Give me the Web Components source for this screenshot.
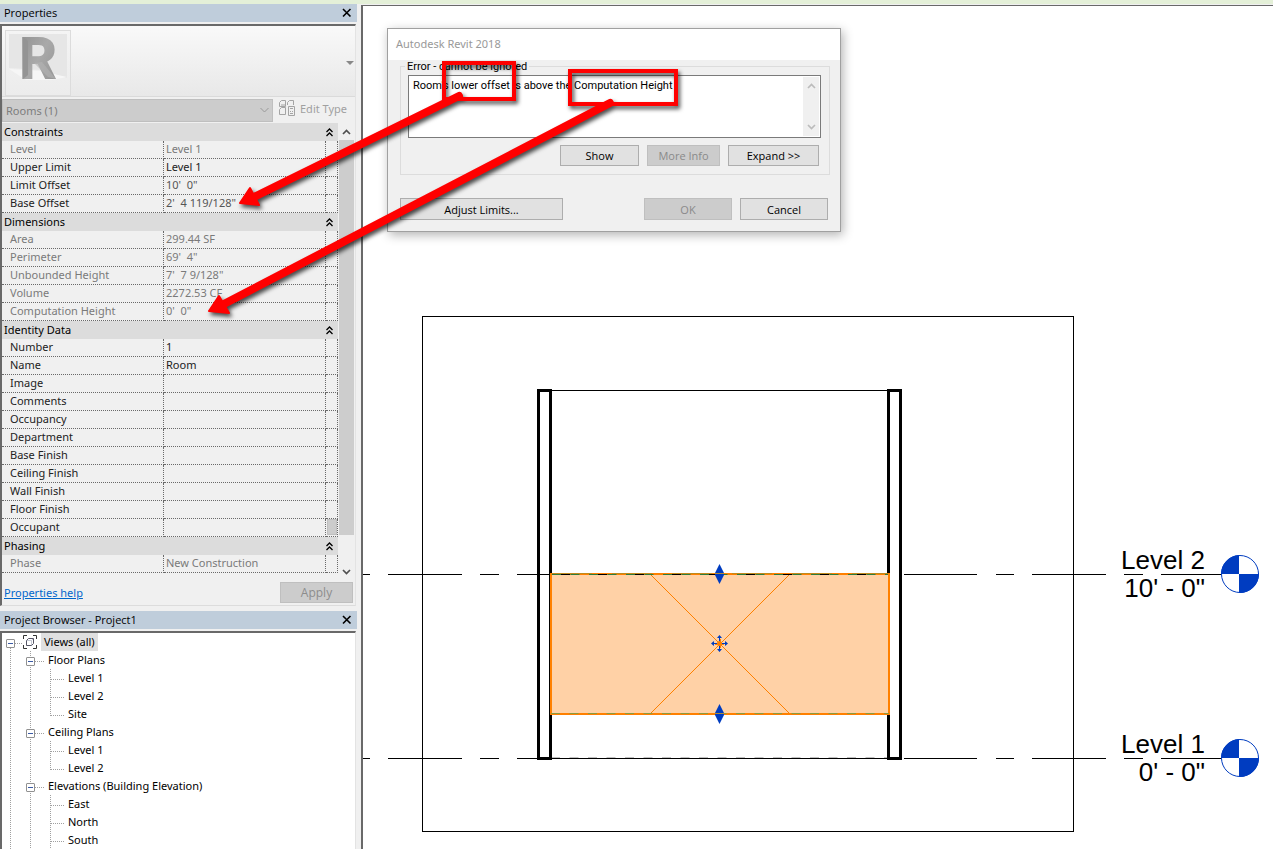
<!DOCTYPE html>
<html lang="en">
<head>
<meta charset="utf-8">
<title>Autodesk Revit 2018</title>
<style>
  :root {
    --face: #f0f0f0;
    --caption: #bfcddb;
    --edge: #696969;
    --orange: #ff8000;
    --blue: #003cc0;
  }
  body {
    margin: 0;
    background: var(--face);
    font-family: "Open Sans", "Noto Sans", sans-serif;
    font-size: 12px;
    color: #000;
  }
</style>
</head>
<body>
<revit-app>
  <dock-panel slot="dock" caption="Properties">
    <type-selector></type-selector>
    <property-grid></property-grid>
    <panel-footer></panel-footer>
  </dock-panel>
  <dock-panel slot="dock" caption="Project Browser - Project1" fill>
    <tree-item label="Views (all)" root open>
      <tree-item label="Floor Plans" open>
        <tree-item label="Level 1"></tree-item>
        <tree-item label="Level 2"></tree-item>
        <tree-item label="Site" last></tree-item>
      </tree-item>
      <tree-item label="Ceiling Plans" open>
        <tree-item label="Level 1"></tree-item>
        <tree-item label="Level 2" last></tree-item>
      </tree-item>
      <tree-item label="Elevations (Building Elevation)" open>
        <tree-item label="East"></tree-item>
        <tree-item label="North"></tree-item>
        <tree-item label="South"></tree-item>
      </tree-item>
    </tree-item>
  </dock-panel>
  <section-view></section-view>
  <error-dialog></error-dialog>
  <mark-up slot="markup"></mark-up>
</revit-app>

<script>
class RevitApp extends HTMLElement {
  constructor() {
    super();
    this.attachShadow({ mode: 'open' });
  }

  connectedCallback() {
    this.shadowRoot.innerHTML = `
    <style>
      :host {
        display: flex;
        flex-direction: column;
        height: 100vh;
        overflow: hidden;
        position: relative;
      }
      .ribbon { height: 4px; flex: none; background: #e4f0d8; }
      .work { flex: 1; min-height: 0; display: flex; gap: 4px; }
      .dock {
        width: 357px;
        flex: none;
        display: flex;
        flex-direction: column;
        gap: 5px;
      }
      main {
        flex: 1;
        min-width: 0;
        margin-top: 1px;
        position: relative;
        overflow: hidden;
        background: #fff;
        border-top: 1px solid var(--edge);
        border-left: 2px solid var(--edge);
      }
    </style>
    <div class="ribbon"></div>
    <div class="work">
      <div class="dock"><slot name="dock"></slot></div>
      <main><slot></slot></main>
    </div>
    <slot name="markup"></slot>
    `;
  }
}

class DockPanel extends HTMLElement {
  constructor() {
    super();
    this.attachShadow({ mode: 'open' });
  }

  connectedCallback() {
    this.shadowRoot.innerHTML = `
    <style>
      :host { display: flex; flex-direction: column; }
      :host([fill]) { flex: 1; min-height: 0; }
      header {
        display: flex;
        align-items: center;
        justify-content: space-between;
        height: 18px;
        padding: 0 4px;
        background: var(--caption);
      }
      h2 { margin: 0; font-size: 11px; line-height: 18px; font-weight: 400; }
      button { border: 0; padding: 0; background: none; width: 12px; height: 12px; display: flex; }
      .body {
        margin: 2px 1px 0 0;
        border: 2px solid var(--edge);
        border-right: 1px solid #e3e3e3;
        border-bottom: 1px solid #dcdcdc;
      }
      :host([fill]) .body { flex: 1; overflow: hidden; background: #fff; border-bottom: 0; }
    </style>
    <header>
      <h2>${this.getAttribute('caption')}</h2>
      <button type="button" aria-label="Close">
        <svg width="12" height="12"><path d="M2 2l7.500 7.500M9.500 2l-7.500 7.500" stroke="#000" stroke-width="1.600"/></svg>
      </button>
    </header>
    <div class="body"><slot></slot></div>
    `;
  }
}

class TypeSelector extends HTMLElement {
  constructor() {
    super();
    this.attachShadow({ mode: 'open' });
  }

  connectedCallback() {
    this.shadowRoot.innerHTML = `
    <style>
      :host { display: block; }
      .type {
        display: flex;
        align-items: center;
        justify-content: space-between;
        height: 67px;
        padding: 3px 1px 0 3px;
        border-bottom: 1px solid #dadada;
        background: linear-gradient(#f9f9f9, #e8e8e8);
      }
      .thumb { overflow: visible; border: 1px solid #dcdcdc; width: 64px; height: 64px; background: linear-gradient(#f4f4f4, #ececec); }
      .filter { display: flex; align-items: center; gap: 6px; margin-top: 2px; }
      .combo { display: grid; width: 271px; align-items: center; }
      .combo > * { grid-area: 1 / 1; }
      .combo svg { justify-self: end; margin-right: 4px; pointer-events: none; }
      select {
        appearance: none;
        width: 100%;
        height: 23px;
        border: 1px solid #bfbfbf;
        border-radius: 0;
        background: #ccc;
        color: #7d7d7d;
        opacity: 1;
        padding: 0 3px;
        font: 11px "Noto Sans", sans-serif;
      }
      .edit {
        display: flex;
        align-items: center;
        gap: 4px;
        border: 0;
        padding: 0 0 4px;
        background: none;
        color: #a0a0a0;
        font: 11px "Noto Sans", sans-serif;
      }
    </style>
    <div class="type">
      <svg class="thumb" viewBox="0 0 64 64" aria-hidden="true">
        <defs>
          <linearGradient id="metal" x1="0" y1="0" x2="1" y2="1">
            <stop offset="0" stop-color="#8c8c8c"/><stop offset=".5" stop-color="#a9a9a9"/><stop offset="1" stop-color="#8f8f8f"/>
          </linearGradient>
        </defs>
        <path d="M3 3H61V47L34 39L3 37Z" fill="#e6e6e6"/>
        <path d="M3 38L34 40L61 46L46 49L20 49Z" fill="#f6f6f6"/>
        <text x="13" y="48" font-family="Roboto" font-weight="900" font-size="59" fill="url(#metal)">R</text>
        <path d="M17 6L22 10V44L17 48Z" fill="#949494"/>
        <path d="M28 32L36 31L50 48L42 46Z" fill="#b4b4b4" opacity=".6"/>
      </svg>
      <svg width="9" height="6"><path d="M1 1h8l-4 4z" fill="#888"/></svg>
    </div>
    <div class="filter">
      <div class="combo">
        <select aria-label="Properties filter" disabled><option>Rooms (1)</option></select>
        <svg width="9" height="7"><path d="M.5 1L4.500 5L8.500 1" fill="none" stroke="#999"/></svg>
      </div>
      <button class="edit" type="button" disabled>
        <svg width="17" height="17" fill="none" stroke="#a4a4a4">
          <path d="M.5 2.500L2.500 .5H6.500V6.500H.5ZM8.500 2.500L10.500 .5H14.500V5M8.500 2.500V5M.5 9.500L2.500 7.500H6.500V14.500H.5ZM2 5H6"/>
          <path d="M9.500 6.500H15.500V15.500H9.500ZM11 8.500H14M11 11.500H12M13 11.500H14M11 13.500H14"/>
        </svg>
        Edit Type
      </button>
    </div>
    `;
  }
}

const GROUPS = [
  ['Constraints', [
    ['Level', 'Level 1', 'off'],
    ['Upper Limit', 'Level 1'],
    ['Limit Offset', "10'  0\"", 'dim'],
    ['Base Offset', "2'  4 119/128\"", 'dim'],
  ]],
  ['Dimensions', [
    ['Area', '299.44 SF', 'off'],
    ['Perimeter', "69'  4\"", 'off'],
    ['Unbounded Height', "7'  7 9/128\"", 'off'],
    ['Volume', '2272.53 CF', 'off'],
    ['Computation Height', "0'  0\"", 'off'],
  ]],
  ['Identity Data', [
    ['Number', '1'],
    ['Name', 'Room'],
    ['Image', ''],
    ['Comments', ''],
    ['Occupancy', ''],
    ['Department', ''],
    ['Base Finish', ''],
    ['Ceiling Finish', ''],
    ['Wall Finish', ''],
    ['Floor Finish', ''],
    ['Occupant', '', 'pick'],
  ]],
  ['Phasing', [
    ['Phase', 'New Construction', 'off'],
  ]],
];

class PropertyGrid extends HTMLElement {
  constructor() {
    super();
    this.attachShadow({ mode: 'open' });
  }

  rows([title, items]) {
    return `
      <tbody>
        <tr class="group">
          <th colspan="2" scope="rowgroup">${title}</th>
          <th><svg width="7" height="9" fill="none" stroke="#000" stroke-width="1.300"><path d="M.5 4L3.500 1L6.500 4M.5 8L3.500 5L6.500 8"/></svg></th>
        </tr>
        ${items.map(([name, value, kind = '']) => `
        <tr class="${kind}">
          <th scope="row">${name}</th>
          <td>${value}</td>
          <td>${kind === 'pick' ? '<button type="button" aria-label="Browse"></button>' : ''}</td>
        </tr>`).join('')}
      </tbody>`;
  }

  connectedCallback() {
    this.shadowRoot.innerHTML = `
    <style>
      :host { display: flex; margin-top: 1px; }
      table {
        flex: 1;
        table-layout: fixed;
        border-collapse: separate;
        border-spacing: 0;
        font: 11px/16px "Noto Sans", sans-serif;
        color: #222;
        align-self: flex-start;
        margin-bottom: 7px;
      }
      .name { width: 162px; }
      .more { width: 12px; }
      th, td {
        height: 17px;
        padding: 0 0 0 8px;
        text-align: left;
        vertical-align: top;
        font-weight: 400;
        white-space: pre;
        border-bottom: 1px dotted var(--edge);
        border-right: 1px dotted var(--edge);
      }
      td { padding: 0 0 0 2px; }
      td:last-child { padding: 0 0 0 1px; }
      .group th { background: #dcdcdc; border: 0; height: 18px; padding: 0 0 0 2px; color: #000; vertical-align: middle; }
      .group th:last-child { padding: 0; }
      .group svg, button { display: block; }
      .off { color: #7a7a7a; }
      .dim td { color: #555; }
      button { width: 10px; height: 16px; padding: 0; border: 1px solid #bfbfbf; background: #ccc; }
      .bar {
        width: 17px;
        display: flex;
        flex-direction: column;
        align-items: center;
      }
      .bar i { flex: 1; margin-bottom: 28px; width: 15px; background: #cdcdcd; }
      .bar svg { flex: none; margin: 6px 0 5px; }
    </style>
    <table>
      <colgroup><col class="name"><col><col class="more"></colgroup>
      ${GROUPS.map(this.rows).join('')}
    </table>
    <div class="bar">
      <svg width="9" height="6"><path d="M1 5L4.500 1.500L8 5" fill="none" stroke="#505050" stroke-width="1.700"/></svg>
      <i></i>
      <svg width="9" height="6"><path d="M1 1L4.500 4.500L8 1" fill="none" stroke="#505050" stroke-width="1.700"/></svg>
    </div>
    `;
  }
}

class PanelFooter extends HTMLElement {
  constructor() {
    super();
    this.attachShadow({ mode: 'open' });
  }

  connectedCallback() {
    this.shadowRoot.innerHTML = `
    <style>
      :host {
        display: flex;
        justify-content: space-between;
        align-items: center;
        padding: 2px;
      }
      a { color: #0066cc; font: 11px/18px "Noto Sans", sans-serif; }
      button {
        width: 73px;
        height: 21px;
        padding: 0;
        border: 1px solid #bfbfbf;
        background: #ccc;
        color: #8c8c8c;
        font: 12px "Open Sans", sans-serif;
      }
    </style>
    <a href="#help">Properties help</a>
    <button type="button" disabled>Apply</button>
    `;
  }
}

class TreeItem extends HTMLElement {
  constructor() {
    super();
    this.attachShadow({ mode: 'open' });
  }

  connectedCallback() {
    const open = this.hasAttribute('open');
    const root = this.hasAttribute('root');
    this.shadowRoot.innerHTML = `
    <style>
      /* the dotted trunk runs down the column of the expanders */
      :host {
        display: block;
        background: repeating-linear-gradient(#a0a0a0 0 1px, transparent 1px 2px) 8px 0 / 1px 100% no-repeat;
      }
      :host([last]) { background-size: 1px 11px; }
      :host([root]) { background-position: 8px 15px; }
      .row { display: flex; align-items: center; height: 18px; padding-left: 4px; }
      .twig {
        width: ${open ? (root ? 7 : 10) : 14}px;
        height: 1px;
        margin: 2px 0 0 ${open ? 0 : 5}px;
        background: repeating-linear-gradient(90deg, #a0a0a0 0 1px, transparent 1px 2px);
      }
      button { width: 9px; height: 9px; padding: 0; margin-top: 2px; border: 1px solid #919191; border-radius: 1px; background: #fff; display: flex; align-items: center; }
      button i { width: 5px; height: 1px; margin: auto; background: #3b5ba5; }
      .icon { margin: 0 4px 0 1px; }
      .label { font: 11px/18px "Noto Sans", sans-serif; padding: 0 3px; }
      :host([root]) .label { background: #e0e0e0; }
      .kids { padding-left: 20px; }
    </style>
    <div class="row">
      ${open ? '<button type="button" aria-label="Collapse"><i></i></button>' : ''}
      <span class="twig"></span>
      ${root ? `<svg class="icon" width="14" height="14" fill="none" stroke="#333">
        <path d="M.5 4V.5H4M10 .5H13.500V4M13.500 10V13.500H10M4 13.500H.5V10"/>
        <path d="M5.500 3.500H10.500V8.500L8.500 10.500H3.500V5.500Z" stroke="#556"/>
        <path d="M4 5.500H8.500V10M8.500 5.500L10 4" stroke="#c4c8d4"/>
      </svg>` : ''}
      <span class="label">${this.getAttribute('label')}</span>
    </div>
    <div class="kids"><slot></slot></div>
    `;
  }
}

class SectionView extends HTMLElement {
  constructor() {
    super();
    this.attachShadow({ mode: 'open' });
  }

  level(y, name, height) {
    return `
      <path d="M362 ${y}.5H370M388 ${y}.5H462M480 ${y}.5H499M517 ${y}.5H551M904 ${y}.5H977M996 ${y}.5H1014M1032 ${y}.5H1106M1124 ${y}.5H1143M1161 ${y}.5H1221" stroke="#000"/>
      <circle cx="1240" cy="${y}" r="18.500" fill="#fff" stroke="var(--blue)"/>
      <path d="M1239 ${y}V${y - 19}A19 19 0 0 0 1221 ${y}ZM1239 ${y}V${y + 19}A19 19 0 0 0 1259 ${y}Z" fill="var(--blue)"/>
      <text x="1121" y="${y - 5}">${name}</text>
      <text x="1205" y="${y + 23}" text-anchor="end">${height}</text>`;
  }

  grip(y) {
    return `<path d="M719.500 ${y - 10}L724 ${y - 1}V${y + 1}L719.500 ${y + 10}L715 ${y + 1}V${y - 1}Z" fill="var(--blue)"/>`;
  }

  connectedCallback() {
    this.shadowRoot.innerHTML = `
    <style>
      :host { display: block; }
      svg { display: block; }
      text { font: 26px "Liberation Sans", Arial, sans-serif; fill: #000; }
      .crisp { shape-rendering: crispEdges; }
    </style>
    <svg width="910" height="843" viewBox="363 6 910 843" fill="none">
      <rect x="422.500" y="316.500" width="651" height="515" stroke="#000"/>
      ${this.level(574, 'Level 2', "10' - 0\"")}
      ${this.level(758, 'Level 1', "0' - 0\"")}
      <path d="M551 390.500H889M551 758.500H889" stroke="#000"/>
      <path d="M551 757.500H889" stroke="#c0c0c0" stroke-dasharray="9 9.500"/>
      <g stroke="#000" stroke-width="3">
        <rect x="538.500" y="390.500" width="12" height="368"/>
        <rect x="888.500" y="390.500" width="12" height="368"/>
      </g>
      <rect x="551" y="574" width="338" height="140" fill="#ffd1a6" stroke="var(--orange)" stroke-width="2"/>
      <path d="M552 573.500H888" stroke="#c08a1e" stroke-dasharray="40 20"/>
      <path d="M552 574.500H888" stroke="#2e7d3c" stroke-dasharray="9 9.500"/>
      <path d="M561 574.500H888" stroke="#000" stroke-dasharray="9 28"/>
      <path d="M551 713.500H889" stroke="#8c9b3c" stroke-dasharray="9 9.500"/>
      <path class="crisp" d="M651 575L789 713M789 575L651 713" stroke="var(--orange)"/>
      ${this.grip(574)}
      ${this.grip(714)}
      <path d="M715 573.500H724M715 713.500H724" stroke="#b08a3c"/>
      <path d="M712 643.500H727M719.500 636V651" stroke="var(--blue)"/>
      <path d="M711 643.500l3-2.500v5zM728 643.500l-3-2.500v5zM719.500 635l-2.500 3h5zM719.500 652l-2.500-3h5z" fill="var(--blue)"/>
      <circle cx="719.500" cy="643.500" r="2.500" fill="var(--orange)"/>
      <path d="M715 644.500H724M720.500 639V648" stroke="var(--orange)"/>
    </svg>
    `;
  }
}

class ErrorDialog extends HTMLElement {
  constructor() {
    super();
    this.attachShadow({ mode: 'open' });
  }

  connectedCallback() {
    this.shadowRoot.innerHTML = `
    <style>
      /* a floating window over the drawing */
      :host {
        position: absolute;
        left: 24px;
        top: 22px;
        width: 452px;
        border: 1px solid #a0a0a0;
        background: var(--face);
        box-shadow: 2px 3px 10px rgba(0, 0, 0, .3);
        font-size: 11px;
      }
      h1 { margin: 0; padding: 0 8px 2px; background: #fff; color: #999; font: 11px/29px "Noto Sans", sans-serif; }
      form { padding: 0 12px 11px; }
      fieldset { margin: 0 -2px 0 0; padding: 3px 8px 8px 7px; border: 1px solid #dcdcdc; min-width: 0; }
      legend { padding: 0 2px; margin-left: -3px; font: 11px/13px Roboto, sans-serif; }
      .box { display: flex; height: 61px; margin: -1px 0 7px; border: 1px solid #7a7a7a; background: #fff; }
      textarea {
        flex: 1;
        resize: none;
        border: 0;
        outline: 0;
        padding: 3px 4px;
        overflow: hidden;
        font: 11px/14px Roboto, sans-serif;
        color: #000;
      }
      .bar {
        display: flex;
        flex-direction: column;
        justify-content: space-between;
        align-items: center;
        width: 16px;
        margin: 1px;
        padding: 6px 0;
        box-sizing: border-box;
        background: var(--face);
      }
      .actions { display: flex; justify-content: flex-end; align-items: center; gap: 8px; padding-right: 2px; }
      .answers { display: flex; align-items: center; gap: 8px; margin-top: 23px; }
      button {
        width: 88px;
        height: 22px;
        padding: 0;
        border: 1px solid #adadad;
        background: #e1e1e1;
        color: #000;
        font: 11px "Open Sans", sans-serif;
      }
      button:disabled { background: #ccc; border-color: #bfbfbf; color: #8a8a8a; }
      .actions button { height: 21px; }
      .actions .show { width: 79px; }
      .actions .info { width: 73px; }
      .actions .more { width: 91px; }
      .adjust { width: 163px; margin-right: auto; }
    </style>
    <h1>Autodesk Revit 2018</h1>
    <form>
      <fieldset>
        <legend>Error - cannot be ignored</legend>
        <div class="box">
          <textarea aria-label="Error message" readonly>Room's lower offset is above the Computation Height</textarea>
          <div class="bar">
            <svg width="9" height="6"><path d="M1 5L4.500 1.500L8 5" fill="none" stroke="#bcbcbc" stroke-width="1.700"/></svg>
            <svg width="9" height="6"><path d="M1 1L4.500 4.500L8 1" fill="none" stroke="#bcbcbc" stroke-width="1.700"/></svg>
          </div>
        </div>
        <div class="actions">
          <button class="show" type="button">Show</button>
          <button class="info" type="button" disabled>More Info</button>
          <button class="more" type="button">Expand &gt;&gt;</button>
        </div>
      </fieldset>
      <div class="answers">
        <button class="adjust" type="button">Adjust Limits...</button>
        <button type="button" disabled>OK</button>
        <button type="button">Cancel</button>
      </div>
    </form>
    `;
  }
}

class MarkUp extends HTMLElement {
  constructor() {
    super();
    this.attachShadow({ mode: 'open' });
  }

  connectedCallback() {
    this.shadowRoot.innerHTML = `
    <style>
      :host { position: absolute; left: 0; top: 0; pointer-events: none; }
      svg { display: block; filter: drop-shadow(2px 3px 2px rgba(0, 0, 0, .7)); }
    </style>
    <svg width="700" height="330" fill="none" stroke="#f00">
      <rect x="444" y="63" width="70" height="36" stroke-width="4"/>
      <rect x="570" y="71" width="106" height="33" stroke-width="4"/>
      <path d="M459 96L252 198M610 103L222 305" stroke-width="8" stroke-linecap="round"/>
      <path d="M240 203L250 188L259 205ZM209 311L219 296L229 313Z" fill="#f00" stroke-width="2" stroke-linejoin="round"/>
    </svg>
    `;
  }
}

customElements.define('revit-app', RevitApp);
customElements.define('dock-panel', DockPanel);
customElements.define('type-selector', TypeSelector);
customElements.define('property-grid', PropertyGrid);
customElements.define('panel-footer', PanelFooter);
customElements.define('tree-item', TreeItem);
customElements.define('section-view', SectionView);
customElements.define('error-dialog', ErrorDialog);
customElements.define('mark-up', MarkUp);
</script>
</body>
</html>
